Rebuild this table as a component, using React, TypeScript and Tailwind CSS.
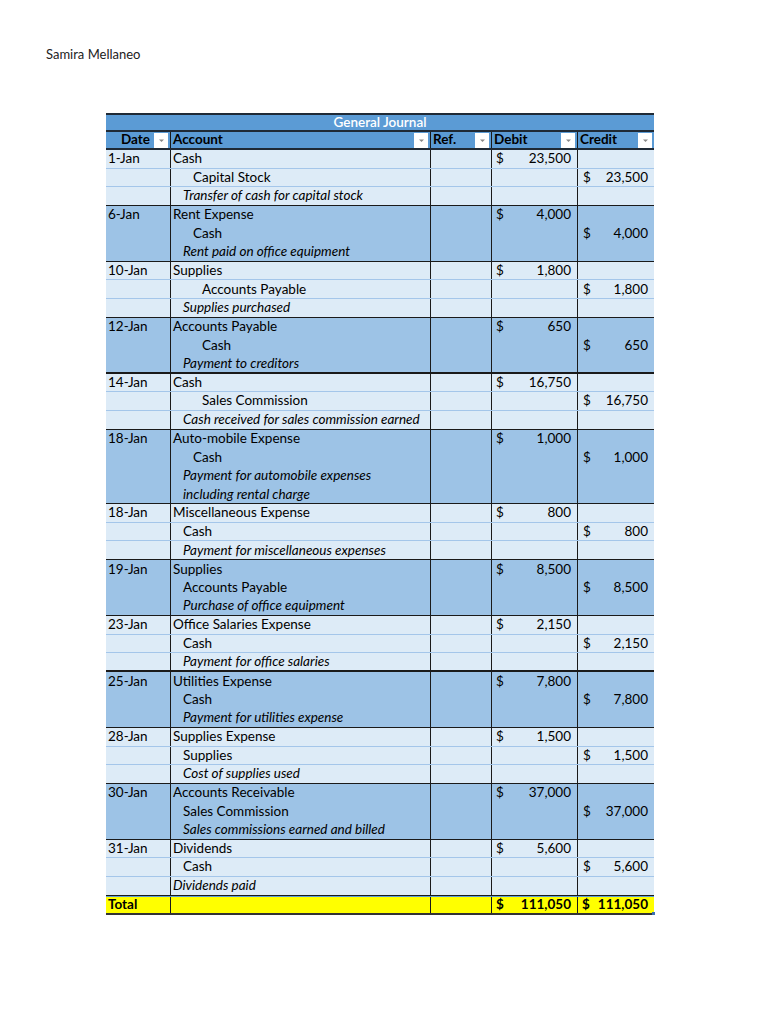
import React from 'react';

type Line = {
  account: string;
  indent?: number;
  italic?: boolean;
  debit?: string;
  credit?: string;
};

type Entry = {
  date: string;
  dark: boolean;
  thick?: boolean;
  lines: Line[];
};

const entries: Entry[] = [
  {
    date: '1-Jan',
    dark: false,
    lines: [
      { account: 'Cash', debit: '23,500' },
      { account: 'Capital Stock', indent: 20, credit: '23,500' },
      { account: 'Transfer of cash for capital stock', indent: 10, italic: true },
    ],
  },
  {
    date: '6-Jan',
    dark: true,
    lines: [
      { account: 'Rent Expense', debit: '4,000' },
      { account: 'Cash', indent: 20, credit: '4,000' },
      { account: 'Rent paid on office equipment', indent: 10, italic: true },
    ],
  },
  {
    date: '10-Jan',
    dark: false,
    lines: [
      { account: 'Supplies', debit: '1,800' },
      { account: 'Accounts Payable', indent: 29, credit: '1,800' },
      { account: 'Supplies purchased', indent: 10, italic: true },
    ],
  },
  {
    date: '12-Jan',
    dark: true,
    thick: true,
    lines: [
      { account: 'Accounts Payable', debit: '650' },
      { account: 'Cash', indent: 29, credit: '650' },
      { account: 'Payment to creditors', indent: 10, italic: true },
    ],
  },
  {
    date: '14-Jan',
    dark: false,
    lines: [
      { account: 'Cash', debit: '16,750' },
      { account: 'Sales Commission', indent: 29, credit: '16,750' },
      { account: 'Cash received for sales commission earned', indent: 10, italic: true },
    ],
  },
  {
    date: '18-Jan',
    dark: true,
    lines: [
      { account: 'Auto-mobile Expense', debit: '1,000' },
      { account: 'Cash', indent: 20, credit: '1,000' },
      { account: 'Payment for automobile expenses', indent: 10, italic: true },
      { account: 'including rental charge', indent: 10, italic: true },
    ],
  },
  {
    date: '18-Jan',
    dark: false,
    lines: [
      { account: 'Miscellaneous Expense', debit: '800' },
      { account: 'Cash', indent: 10, credit: '800' },
      { account: 'Payment for miscellaneous expenses', indent: 10, italic: true },
    ],
  },
  {
    date: '19-Jan',
    dark: true,
    lines: [
      { account: 'Supplies', debit: '8,500' },
      { account: 'Accounts Payable', indent: 10, credit: '8,500' },
      { account: 'Purchase of office equipment', indent: 10, italic: true },
    ],
  },
  {
    date: '23-Jan',
    dark: false,
    thick: true,
    lines: [
      { account: 'Office Salaries Expense', debit: '2,150' },
      { account: 'Cash', indent: 10, credit: '2,150' },
      { account: 'Payment for office salaries', indent: 10, italic: true },
    ],
  },
  {
    date: '25-Jan',
    dark: true,
    lines: [
      { account: 'Utilities Expense', debit: '7,800' },
      { account: 'Cash', indent: 10, credit: '7,800' },
      { account: 'Payment for utilities expense', indent: 10, italic: true },
    ],
  },
  {
    date: '28-Jan',
    dark: false,
    lines: [
      { account: 'Supplies Expense', debit: '1,500' },
      { account: 'Supplies', indent: 10, credit: '1,500' },
      { account: 'Cost of supplies used', indent: 10, italic: true },
    ],
  },
  {
    date: '30-Jan',
    dark: true,
    lines: [
      { account: 'Accounts Receivable', debit: '37,000' },
      { account: 'Sales Commission', indent: 10, credit: '37,000' },
      { account: 'Sales commissions earned and billed', indent: 10, italic: true },
    ],
  },
  {
    date: '31-Jan',
    dark: false,
    lines: [
      { account: 'Dividends', debit: '5,600' },
      { account: 'Cash', indent: 10, credit: '5,600' },
      { account: 'Dividends paid', italic: true },
    ],
  },
];

const cols = 'grid grid-cols-[64px_260px_61px_86px_77px]';

// 下拉筛选按钮
function FilterButton() {
  return (
    <span className="flex h-[15px] w-[14px] items-center justify-center bg-white">
      <svg width="7" height="5" viewBox="0 0 7 5">
        <path d="M1 1.5h5L3.5 4z" fill="#8a8a8a" />
      </svg>
    </span>
  );
}

function Amount({ value, bold, left }: { value?: string; bold?: boolean; left: string }) {
  if (!value) return null;
  return (
    <div className={`flex w-full items-center justify-between pr-[6px] ${left} ${bold ? 'font-bold' : ''}`}>
      <span>$</span>
      <span>{value}</span>
    </div>
  );
}

function EntryRows({ entry }: { entry: Entry }) {
  const bg = entry.dark ? 'bg-[#9dc3e6]' : 'bg-[#ddebf7]';
  return (
    <div className={bg}>
      {entry.lines.map((line, i) => {
        const last = i === entry.lines.length - 1;
        const bottom = last
          ? entry.thick
            ? 'border-b-2 border-[#1a1a1a]'
            : 'border-b border-[#1a1a1a]'
          : entry.dark
            ? ''
            : 'border-b border-[#a4c6ea]';
        return (
          <div key={i} className={`${cols} h-[18.65px] ${bottom}`}>
            <div className="flex items-center pl-[2px]">{i === 0 ? entry.date : ''}</div>
            <div className="flex items-center border-l border-[#1a1a1a] pl-[2px]">
              <span className={line.italic ? 'italic' : ''} style={{ paddingLeft: line.indent ?? 0 }}>
                {line.account}
              </span>
            </div>
            <div className="border-l border-[#1a1a1a]" />
            <div className="flex items-center border-l border-[#1a1a1a]">
              <Amount value={line.debit} left="pl-[4px]" />
            </div>
            <div className="flex items-center border-l border-[#1a1a1a]">
              <Amount value={line.credit} left="pl-[5px]" />
            </div>
          </div>
        );
      })}
    </div>
  );
}

export default function App() {
  return (
    <div
      className="min-h-[1024px] w-[768px] bg-white text-[13.5px] leading-none text-black"
      style={{ fontFamily: 'Lato, "Open Sans", sans-serif' }}
    >
      <div className="pl-[46px] pt-[48px] text-[13px] text-[#222]">Samira Mellaneo</div>

      <div className="ml-[106px] mt-[52px] w-[548px]">
        {/* 标题 */}
        <div className="flex h-[19px] items-center justify-center border-t-2 border-b-2 border-[#1f2a36] bg-[#5b9bd5] font-semibold text-white">
          General Journal
        </div>

        {/* 表头 */}
        <div className={`${cols} h-[18px] border-b-2 border-[#1f2a36] bg-[#5b9bd5] font-bold`}>
          <div className="flex items-center justify-end gap-[4px] pr-[2px]">
            <span>Date</span>
            <FilterButton />
          </div>
          <div className="flex items-center justify-between border-l border-[#1a1a1a] pl-[2px] pr-[2px]">
            <span>Account</span>
            <FilterButton />
          </div>
          <div className="flex items-center justify-between border-l border-[#1a1a1a] pl-[2px] pr-[2px]">
            <span>Ref.</span>
            <FilterButton />
          </div>
          <div className="flex items-center justify-between border-l border-[#1a1a1a] pl-[2px] pr-[2px]">
            <span>Debit</span>
            <FilterButton />
          </div>
          <div className="flex items-center justify-between border-l border-[#1a1a1a] pl-[2px] pr-[2px]">
            <span>Credit</span>
            <FilterButton />
          </div>
        </div>

        {entries.map((entry, i) => (
          <EntryRows key={i} entry={entry} />
        ))}

        {/* 合计 */}
        <div className={`${cols} relative h-[19px] border-t border-[#5b9bd5] border-b-2 border-b-[#333] bg-[#ffff00] font-bold`}>
          <div className="flex items-center pl-[2px]">Total</div>
          <div className="border-l border-[#1a1a1a]" />
          <div className="border-l border-[#1a1a1a]" />
          <div className="flex items-center border-l border-[#1a1a1a]">
            <Amount value="111,050" bold left="pl-[4px]" />
          </div>
          <div className="flex items-center border-l border-[#1a1a1a]">
            <Amount value="111,050" bold left="pl-[4px]" />
          </div>
          <span className="absolute -bottom-[2px] -right-[1px] h-[3px] w-[3px] bg-[#3a6fb0]" />
        </div>
      </div>
    </div>
  );
}
